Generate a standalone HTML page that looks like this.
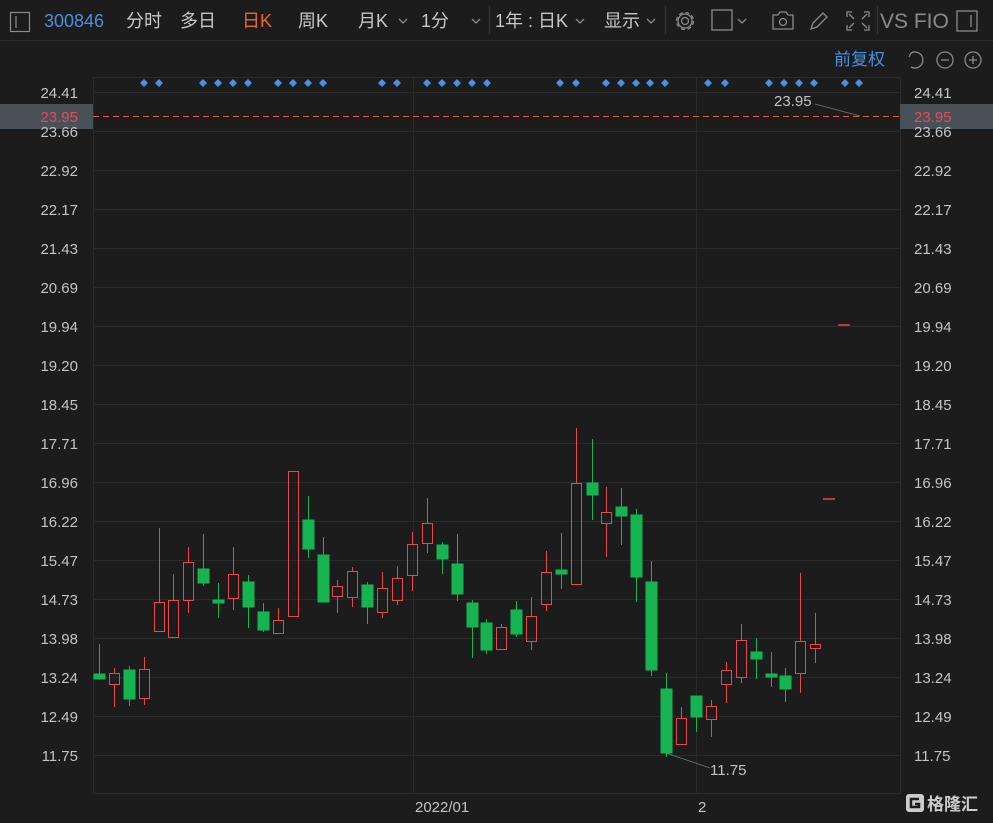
<!DOCTYPE html>
<html><head><meta charset="utf-8"><style>
body{margin:0;background:#1c1c1d;width:993px;height:823px;overflow:hidden;font-family:"Liberation Sans","Noto Sans CJK SC",sans-serif;}
svg{position:absolute;left:0;top:0}
</style></head><body>
<svg width="993" height="823" xmlns="http://www.w3.org/2000/svg" font-family="Liberation Sans, Noto Sans CJK SC, sans-serif">
<rect width="993" height="823" fill="#1c1c1d"/>
<line x1="0" y1="40.5" x2="993" y2="40.5" stroke="#2c2c2e"/>
<rect x="10.5" y="12.5" width="19" height="19" fill="none" stroke="#8a8a8a" stroke-width="1.2"/>
<line x1="16" y1="16" x2="16" y2="28" stroke="#8a8a8a" stroke-width="1.2"/>
<g font-size="18" fill="#c8c8c8">
<text x="44" y="27" fill="#4a8fe0">300846</text>
<text x="126" y="27">分时</text>
<text x="180" y="27">多日</text>
<text x="242" y="27" fill="#f0652a">日K</text>
<text x="298" y="27">周K</text>
<text x="358" y="27">月K</text>
<text x="421" y="27">1分</text>
<text x="495" y="27">1年 : 日K</text>
<text x="604" y="27">显示</text>
<text x="880" y="28" font-size="21" fill="#8a8a8a">VS FIO</text>
</g>
<g fill="none" stroke="#8a8a8a" stroke-width="1.3">
<path d="M399 19l4 4 4-4M472 19l4 4 4-4M576 19l4 4 4-4M647 19l4 4 4-4M738 19l4 4 4-4"/>
<line x1="489.5" y1="6" x2="489.5" y2="34" stroke="#333"/>
<line x1="665.5" y1="6" x2="665.5" y2="34" stroke="#333"/>
<line x1="877.5" y1="6" x2="877.5" y2="34" stroke="#333"/>
<circle cx="685" cy="21" r="3.5"/>
<circle cx="685" cy="21" r="8.5" stroke-dasharray="4,2.7"/>
<circle cx="685" cy="21" r="7"/>
<rect x="712" y="10" width="20" height="20"/>
<path d="M773 15h5l2-3h6l2 3h5v14h-20z"/><circle cx="783" cy="22" r="3.5"/>
<path d="M811 29l2-6 10-10 4 4-10 10z"/>
<path d="M847 17v-5h5M864 12h5v5M869 25v5h-5M852 30h-5v-5M849 14l5 5M867 14l-5 5M867 28l-5-5M849 28l5-5"/>
<rect x="957" y="11" width="20" height="20"/><line x1="971" y1="15" x2="971" y2="27"/>
</g>
<text x="834" y="65" font-size="17" fill="#4a8fe0">前复权</text>
<g fill="none" stroke="#8a8a8a" stroke-width="1.3">
<path d="M911 53a8 8 0 1 1 0 14M911 53l-2 4"/>
<circle cx="945" cy="60" r="8"/><line x1="941" y1="60" x2="949" y2="60"/>
<circle cx="973" cy="60" r="8"/><line x1="969" y1="60" x2="977" y2="60"/><line x1="973" y1="56" x2="973" y2="64"/>
</g>
<g stroke="#2a2a2b" stroke-width="1">
<rect x="93.5" y="77.5" width="807" height="716" fill="none"/>
<path d="M93 92.5h807M93 131.5h807M93 170.5h807M93 209.5h807M93 248.5h807M93 287.5h807M93 326.5h807M93 365.5h807M93 404.5h807M93 443.5h807M93 482.5h807M93 521.5h807M93 560.5h807M93 599.5h807M93 638.5h807M93 677.5h807M93 716.5h807M93 755.5h807"/>
<path d="M413.5 78v716M696.5 78v716"/>
</g>
<rect x="0" y="104" width="93" height="25" fill="#485058"/>
<rect x="900" y="104" width="93" height="25" fill="#485058"/>
<line x1="93" y1="116.5" x2="900" y2="116.5" stroke="#e0652a" stroke-dasharray="6,4"/>
<g font-size="15" fill="#c4c4c4">
<g text-anchor="end">
<text x="78" y="98">24.41</text><text x="78" y="122" fill="#e84a5a">23.95</text><text x="78" y="137">23.66</text>
<text x="78" y="176">22.92</text><text x="78" y="215">22.17</text><text x="78" y="254">21.43</text><text x="78" y="293">20.69</text>
<text x="78" y="332">19.94</text><text x="78" y="371">19.20</text><text x="78" y="410">18.45</text><text x="78" y="449">17.71</text>
<text x="78" y="488">16.96</text><text x="78" y="527">16.22</text><text x="78" y="566">15.47</text><text x="78" y="605">14.73</text>
<text x="78" y="644">13.98</text><text x="78" y="683">13.24</text><text x="78" y="722">12.49</text><text x="78" y="761">11.75</text>
</g>
<text x="914" y="98">24.41</text><text x="914" y="137">23.66</text>
<text x="914" y="176">22.92</text><text x="914" y="215">22.17</text><text x="914" y="254">21.43</text><text x="914" y="293">20.69</text>
<text x="914" y="332">19.94</text><text x="914" y="371">19.20</text><text x="914" y="410">18.45</text><text x="914" y="449">17.71</text>
<text x="914" y="488">16.96</text><text x="914" y="527">16.22</text><text x="914" y="566">15.47</text><text x="914" y="605">14.73</text>
<text x="914" y="644">13.98</text><text x="914" y="683">13.24</text><text x="914" y="722">12.49</text><text x="914" y="761">11.75</text>
<rect x="900" y="104" width="93" height="18" fill="#485058"/>
<text x="914" y="122" fill="#e84a5a">23.95</text>
<text x="415" y="812">2022/01</text><text x="698" y="812">2</text>
<text x="774" y="106">23.95</text><text x="710" y="775">11.75</text>
</g>
<path d="M815 104L860 116M666 753L710 768" stroke="#777" stroke-width="0.8"/>
<g fill="#4a8fe0">
<path d="M144 79l4 4-4 4-4-4zM159 79l4 4-4 4-4-4zM203 79l4 4-4 4-4-4zM218 79l4 4-4 4-4-4zM233 79l4 4-4 4-4-4zM248 79l4 4-4 4-4-4zM278 79l4 4-4 4-4-4zM293 79l4 4-4 4-4-4zM308 79l4 4-4 4-4-4zM323 79l4 4-4 4-4-4zM382 79l4 4-4 4-4-4zM397 79l4 4-4 4-4-4zM427 79l4 4-4 4-4-4zM442 79l4 4-4 4-4-4zM457 79l4 4-4 4-4-4zM472 79l4 4-4 4-4-4zM487 79l4 4-4 4-4-4zM560 79l4 4-4 4-4-4zM576 79l4 4-4 4-4-4zM606 79l4 4-4 4-4-4zM621 79l4 4-4 4-4-4zM636 79l4 4-4 4-4-4zM650 79l4 4-4 4-4-4zM665 79l4 4-4 4-4-4zM708 79l4 4-4 4-4-4zM725 79l4 4-4 4-4-4zM769 79l4 4-4 4-4-4zM784 79l4 4-4 4-4-4zM799 79l4 4-4 4-4-4zM814 79l4 4-4 4-4-4zM845 79l4 4-4 4-4-4zM859 79l4 4-4 4-4-4z"/>
</g>
<g stroke="#16b451" fill="#16b451" stroke-width="1">
<path d="M99.5 644v36M129.5 666v40M203.5 534v52M218.5 583v35M248.5 575v53M263.5 603v29M308.5 496v62M323.5 537v65M367.5 582v42M442.5 542v32M457.5 534v67M472.5 600v58M486.5 619v35M516.5 601v36M561.5 533v56M592.5 439v81M621.5 488v57M636.5 509v93M651.5 561v115M666.5 673v84M696.5 696v36M756.5 638v41M771.5 652v35M785.5 668v34" fill="none"/>
<rect x="94" y="674" width="11" height="5"/><rect x="124" y="670" width="11" height="29"/>
<rect x="198" y="569" width="11" height="14"/><rect x="213" y="600" width="11" height="3"/>
<rect x="243" y="582" width="11" height="25"/><rect x="258" y="612" width="11" height="18"/>
<rect x="303" y="520" width="11" height="29"/><rect x="318" y="555" width="11" height="47"/>
<rect x="362" y="585" width="11" height="22"/><rect x="437" y="545" width="11" height="14"/>
<rect x="452" y="564" width="11" height="30"/><rect x="467" y="603" width="11" height="24"/>
<rect x="481" y="623" width="11" height="27"/><rect x="511" y="610" width="11" height="24"/>
<rect x="556" y="570" width="11" height="4"/><rect x="587" y="483" width="11" height="12"/>
<rect x="616" y="507" width="11" height="9"/><rect x="631" y="515" width="11" height="62"/>
<rect x="646" y="582" width="11" height="88"/><rect x="661" y="689" width="11" height="64"/>
<rect x="691" y="696" width="11" height="21"/><rect x="751" y="652" width="11" height="7"/>
<rect x="766" y="674" width="11" height="3"/><rect x="780" y="676" width="11" height="13"/>
</g>
<g stroke="#e5484d" fill="none" stroke-width="1">
<path d="M114.5 668v5M114.5 684v23M144.5 657v12M144.5 698v7M159.5 528v74M173.5 574v26M188.5 547v15M188.5 600v13M233.5 547v27M233.5 598v12M278.5 608v12M337.5 580v6M337.5 596v17M352.5 567v4M352.5 597v10M382.5 572v16M382.5 612v6M397.5 566v12M397.5 600v5M412.5 532v12M412.5 575v16M427.5 498v25M427.5 543v10M501.5 624v3M531.5 597v19M531.5 641v9M546.5 551v21M546.5 604v7M576.5 428v55M606.5 487v25M606.5 523v34M681.5 707v11M711.5 700v6M711.5 719v18M726.5 662v8M726.5 684v19M741.5 624v16M741.5 677v6M800.5 573v68M800.5 673v20M815.5 613v31M815.5 648v15"/>
<rect x="109.5" y="673.5" width="10" height="11"/><rect x="139.5" y="669.5" width="10" height="29"/>
<rect x="154.5" y="602.5" width="10" height="29"/><rect x="168.5" y="600.5" width="10" height="37"/>
<rect x="183.5" y="562.5" width="10" height="38"/><rect x="228.5" y="574.5" width="10" height="24"/>
<rect x="273.5" y="620.5" width="10" height="13"/><rect x="288.5" y="471.5" width="10" height="145"/>
<rect x="332.5" y="586.5" width="10" height="10"/><rect x="347.5" y="571.5" width="10" height="26"/>
<rect x="377.5" y="588.5" width="10" height="24"/><rect x="392.5" y="578.5" width="10" height="22"/>
<rect x="407.5" y="544.5" width="10" height="31"/><rect x="422.5" y="523.5" width="10" height="20"/>
<rect x="496.5" y="627.5" width="10" height="22"/><rect x="526.5" y="616.5" width="10" height="25"/>
<rect x="541.5" y="572.5" width="10" height="32"/><rect x="571.5" y="483.5" width="10" height="101"/>
<rect x="601.5" y="512.5" width="10" height="11"/><rect x="676.5" y="718.5" width="10" height="26"/>
<rect x="706.5" y="706.5" width="10" height="13"/><rect x="721.5" y="670.5" width="10" height="14"/>
<rect x="736.5" y="640.5" width="10" height="37"/><rect x="795.5" y="641.5" width="10" height="32"/>
<rect x="810.5" y="644.5" width="10" height="4"/>
</g>
<path d="M823 499h12M838 325h12" stroke="#e5484d" stroke-width="1.5"/>
<rect x="906" y="794" width="18" height="18" rx="3" fill="#ccc"/>
<path d="M919 799h-8v8h8v-3h-4" stroke="#1c1c1d" stroke-width="2.5" fill="none"/>
<text x="927" y="810" font-size="17" fill="#ccc" font-weight="bold">格隆汇</text>
</svg>
</body></html>
